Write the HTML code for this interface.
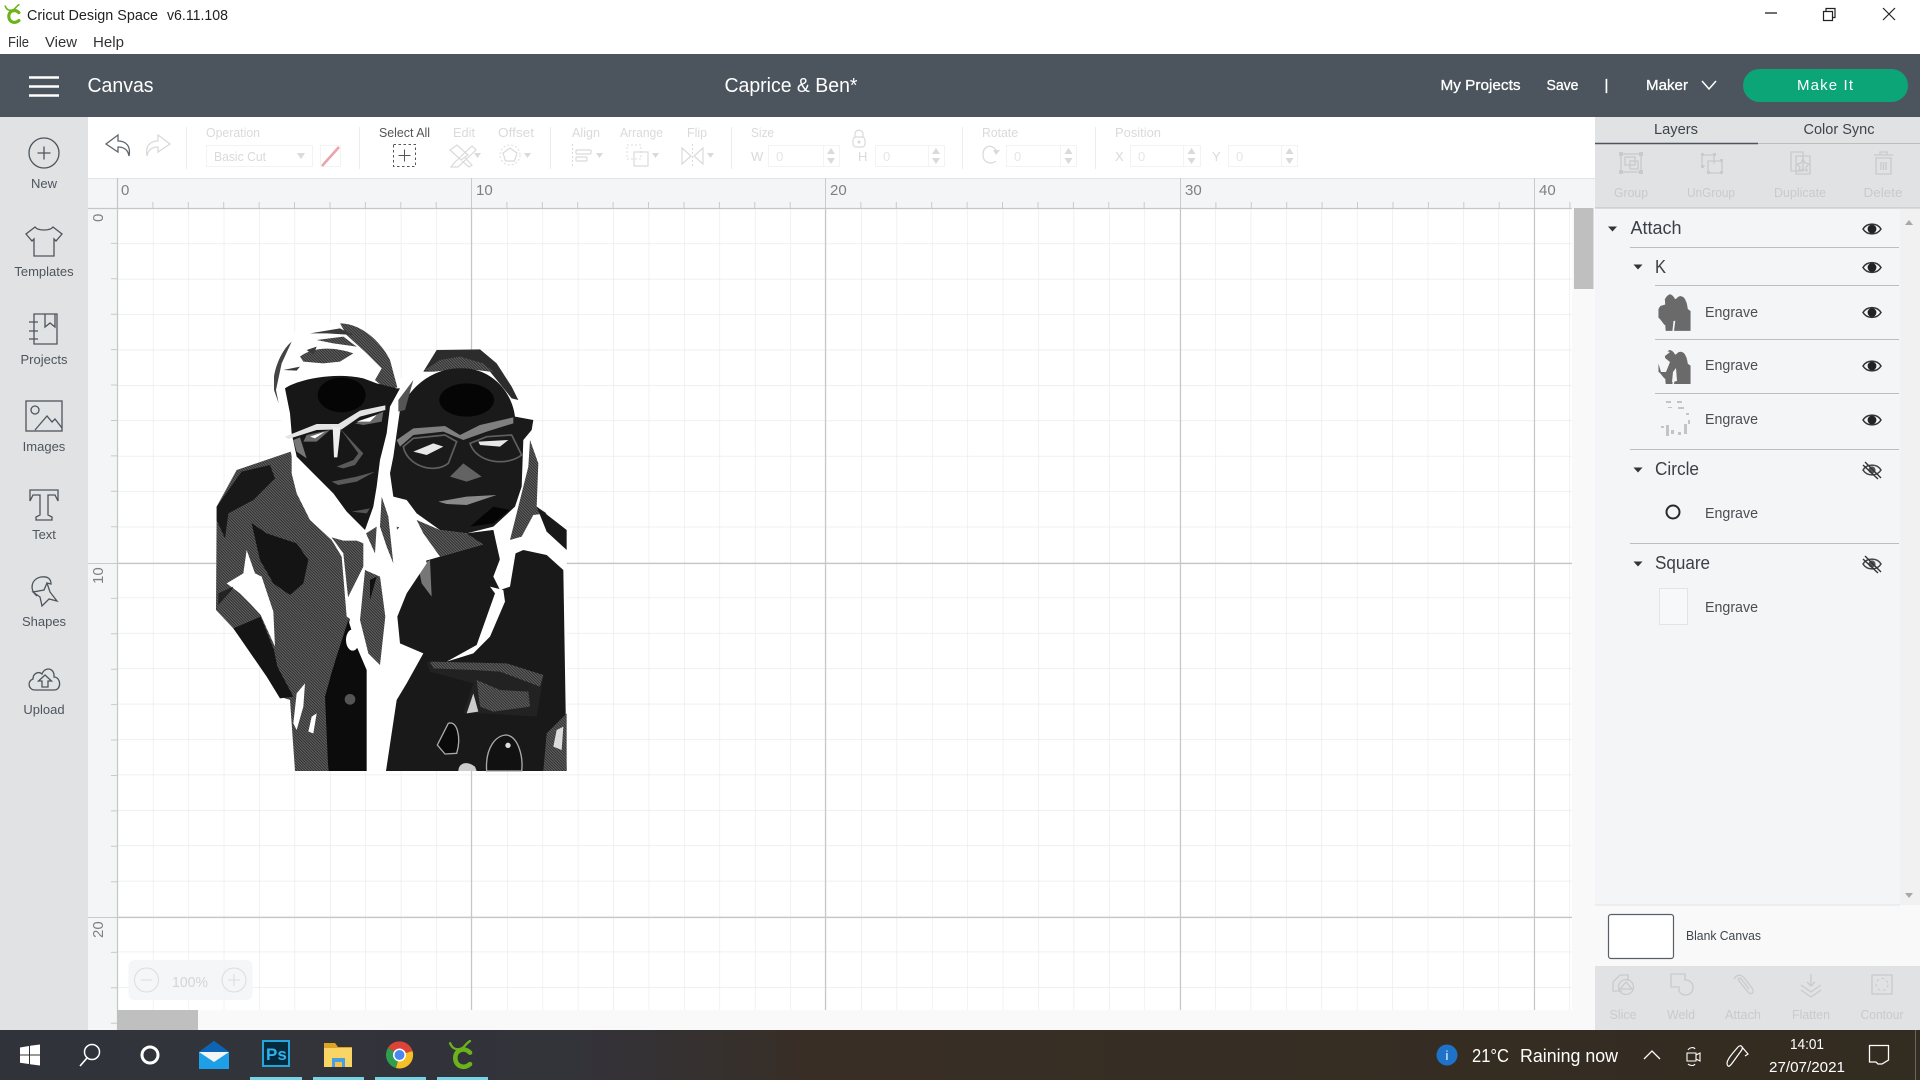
<!DOCTYPE html>
<html lang="en"><head><meta charset="utf-8"><title>Cricut Design Space</title>
<style>
html,body{margin:0;padding:0;width:1920px;height:1080px;overflow:hidden;background:#fff}
svg{display:block;position:absolute;left:0;top:0}
text{font-family:"Liberation Sans",sans-serif}
.d{fill:#d9dadb;font-size:13px}
.g{fill:#c9cacb;font-size:13px}
.n{fill:#4c555d;font-size:13px;text-anchor:middle}
.w{fill:#fff}
.r{fill:#808080;font-size:15px}
.e{fill:#4a4f54;font-size:15px}
.h{fill:#3a4046;font-size:18px}
.ic{fill:none;stroke:#4c555d;stroke-width:1.3}
.lt{fill:none;stroke:#d9dadb;stroke-width:1.2}
.pi{fill:none;stroke:#c9cacb;stroke-width:1.3}
.box{fill:#fff;stroke:#f3f3f3}
.sp{fill:#d9dadb}
.z{fill:#e6e6e6;font-size:13px}
</style></head><body>
<svg width="1920" height="1080" viewBox="0 0 1920 1080" xmlns="http://www.w3.org/2000/svg">
<defs>
<pattern id="mn" x="117.5" y="208" width="35.41" height="35.41" patternUnits="userSpaceOnUse"><path d="M0,0V35.41M0,0H35.41" stroke="#e8e8e8" stroke-width="1.2" fill="none"/></pattern>
<pattern id="hat" width="6" height="6" patternUnits="userSpaceOnUse" patternTransform="rotate(45)"><rect width="6" height="6" fill="#626262"/><rect width="6" height="2.8" fill="#2c2c2c"/></pattern>
<g id="eye"><path d="M-9,0C-5,-6.5 5,-6.5 9,0C5,6.5 -5,6.5 -9,0Z" fill="none" stroke="#333" stroke-width="1.5"/><circle r="4.4" fill="#222"/></g>
<g id="eyex"><path d="M-9,0C-5,-6.5 5,-6.5 9,0C5,6.5 -5,6.5 -9,0Z" fill="none" stroke="#444" stroke-width="1.5"/><circle r="3.6" fill="#555"/><path d="M-7,-8L9,8M-9,-5L6,9" stroke="#333" stroke-width="1.4"/></g>
<path id="tri" d="M-4.5,-2.5H4.5L0,2.5Z" fill="#333"/>
<path id="spin" d="M0,-8L4,-2H-4ZM0,8L4,2H-4Z" fill="#d9dadb"/>
<g id="sil">
<path d="M255,265C290,200 330,120 420,80C500,100 560,170 590,260C640,240 680,160 760,148C860,150 930,240 950,350L1000,360L1010,620L1100,690V1413H285L270,1200L240,1190L100,985L48,930V620L110,510L270,455Z"/>
<path d="M600,60V262L660,215L720,60ZM505,1420H558L600,1040L540,1060ZM900,60L1010,350L1110,350V690L1015,610ZM0,60L250,260L265,450L0,520Z" fill="#f4f5f7"/>
</g>
<g id="cri" fill="none" stroke="#6cb31b" stroke-linecap="round"><path d="M20,12C14,6 6,10 6,17C6,25 14,28 20,23" stroke-width="4.4"/><path d="M1,3C3,8 7,10 12,8C15,7 16,3 20,1" stroke-width="2.2"/></g>
</defs>

<!-- title and menu -->
<rect width="1920" height="54" fill="#fff"/>
<use href="#cri" transform="translate(4.5,4) scale(.72)"/>
<text x="27" y="20" font-size="15" fill="#222" textLength="131" lengthAdjust="spacingAndGlyphs">Cricut Design Space</text>
<text x="167" y="20" font-size="15" fill="#222" textLength="61" lengthAdjust="spacingAndGlyphs">v6.11.108</text>
<text x="8" y="47" font-size="15" fill="#333" textLength="21" lengthAdjust="spacingAndGlyphs">File</text>
<text x="45" y="47" font-size="15" fill="#333" textLength="32" lengthAdjust="spacingAndGlyphs">View</text>
<text x="93" y="47" font-size="15" fill="#333" textLength="31" lengthAdjust="spacingAndGlyphs">Help</text>
<path d="M1765,13H1777" stroke="#222" stroke-width="1.3"/>
<path d="M1823.5,11.5H1832.5V20.5H1823.5ZM1826,11.5V8.5H1835V17.5H1832.5" fill="none" stroke="#222" stroke-width="1.2"/>
<path d="M1883,8L1895,20M1895,8L1883,20" stroke="#222" stroke-width="1.2"/>

<!-- top nav -->
<rect y="54" width="1920" height="63" fill="#4c555d"/>
<path d="M29,77.5H59M29,86.5H59M29,95.5H59" stroke="#fff" stroke-width="2.6"/>
<text class="w" x="87.5" y="92" font-size="20" textLength="66" lengthAdjust="spacingAndGlyphs">Canvas</text>
<text class="w" x="724.5" y="92" font-size="20" textLength="133" lengthAdjust="spacingAndGlyphs">Caprice &amp; Ben*</text>
<g stroke="#fff" stroke-width=".3">
<text class="w" x="1440.5" y="90" font-size="15" textLength="80" lengthAdjust="spacingAndGlyphs">My Projects</text>
<text class="w" x="1546.5" y="90" font-size="15" textLength="32" lengthAdjust="spacingAndGlyphs">Save</text>
<text class="w" x="1604.5" y="90" font-size="15">|</text>
<text class="w" x="1646" y="90" font-size="15" textLength="42" lengthAdjust="spacingAndGlyphs">Maker</text>
</g>
<path d="M1702,81L1709,89L1716,81" fill="none" stroke="#fff" stroke-width="1.5"/>
<rect x="1743" y="69" width="165" height="33" rx="16.5" fill="#0ba577"/>
<text class="w" x="1797" y="90" font-size="15" textLength="56" lengthAdjust="spacing">Make It</text>

<!-- sidebar -->
<rect y="117" width="88" height="913" fill="#e1e2e4"/>
<circle cx="44" cy="153" r="15" class="ic"/><path d="M44,146.5V159.5M37.5,153H50.5" class="ic" stroke-width="1.7"/>
<text class="n" x="44" y="188">New</text>
<path d="M35,227C38,231 50,231 53,227L62,234L56,241L54,239V256H34V239L32,241L26,234Z" class="ic"/>
<text class="n" x="44" y="276">Templates</text>
<path d="M34,314H57V344H34ZM29,322H38M29,331H38M29,339H38M45,314V327L50,323L55,327V314" class="ic"/>
<text class="n" x="44" y="364">Projects</text>
<rect x="26" y="401" width="36" height="30" class="ic"/><circle cx="35" cy="410" r="4" class="ic"/><path d="M35,430L47,416L52,422L55,419L62,428" class="ic"/>
<text class="n" x="44" y="451">Images</text>
<path d="M30,490H58V501L55,495H48V515L52,517V520H36V517L40,515V495H33L30,501Z" class="ic"/>
<text class="n" x="44" y="539">Text</text>
<path d="M37,596C29,590 31,579 41,577C48,576 51,579 51,584L47,583L50,592L57,601L49,599L42,606L40,597L33,592L44,590L47,583" class="ic"/>
<text class="n" x="44" y="626">Shapes</text>
<path d="M35,690C28,690 27,681 33,679C33,673 39,671 42,674C45,666 55,668 54,677C61,677 62,690 54,690ZM42,687V681H38.5L45,675L51.5,681H48V687Z" class="ic"/>
<text class="n" x="44" y="714">Upload</text>

<!-- toolbar -->
<path d="M118,135L106,144L118,152V147C124,147 128,150 129,156C131,146 126,141 118,141Z" fill="none" stroke="#5e666d" stroke-width="1.3"/>
<path d="M158,135L170,144L158,152V147C152,147 148,150 147,156C145,146 150,141 158,141Z" fill="none" stroke="#d9dadb" stroke-width="1.3"/>
<path d="M186.5,127V169M359.5,127V169M550.5,127V169M731.5,127V169M962.5,127V169M1095.5,127V169" stroke="#ececec"/>
<text class="d" x="206" y="137" textLength="54" lengthAdjust="spacingAndGlyphs">Operation</text>
<rect x="206.500" y="145.500" width="106" height="21" class="box"/>
<text class="d" x="214" y="161" textLength="52" lengthAdjust="spacingAndGlyphs">Basic Cut</text>
<path d="M297,153H305L301,159Z" class="sp"/>
<rect x="320.500" y="145.500" width="20" height="21" class="box"/>
<path d="M322,166L339,147" stroke="#e8a5aa" stroke-width="2.6"/>
<text x="379" y="137" font-size="13" fill="#555" textLength="51" lengthAdjust="spacingAndGlyphs">Select All</text>
<rect x="393.500" y="144.500" width="22" height="22" fill="none" stroke="#555" stroke-dasharray="2.500 2.500"/>
<path d="M404.500,149.500V161.500M398.500,155.500H410.500" stroke="#555"/>
<text class="d" x="453" y="137" textLength="22" lengthAdjust="spacingAndGlyphs">Edit</text>
<path d="M450,150L457,145L468,155L461,160ZM454,163L472,146L476,150L458,167L451,167Z" class="lt"/><path d="M465,158L472,165L469,167L462,161" class="lt"/>
<path d="M474,153H481L477.500,158Z" class="sp"/>
<text class="d" x="498" y="137" textLength="36" lengthAdjust="spacingAndGlyphs">Offset</text>
<path d="M510,148L517,153L514.500,161H505.500L503,153Z" class="lt"/><circle cx="510" cy="155" r="10" fill="none" stroke="#dcddde" stroke-dasharray="2 2"/>
<path d="M524,153H531L527.500,158Z" class="sp"/>
<text class="d" x="572" y="137" textLength="28" lengthAdjust="spacingAndGlyphs">Align</text>
<path d="M572.500,144V167" stroke="#d9dadb" stroke-dasharray="2 2"/><rect x="576" y="150" width="15" height="4" rx="1" class="lt"/><rect x="576" y="157" width="11" height="4" rx="1" class="lt"/>
<path d="M596,153H603L599.500,158Z" class="sp"/>
<text class="d" x="620" y="137" textLength="43" lengthAdjust="spacingAndGlyphs">Arrange</text>
<rect x="627" y="145" width="14" height="14" fill="none" stroke="#dcddde" stroke-dasharray="2 2"/><rect x="634" y="152" width="14" height="14" fill="#fff" class="lt"/>
<path d="M652,153H659L655.500,158Z" class="sp"/>
<text class="d" x="687" y="137" textLength="20" lengthAdjust="spacingAndGlyphs">Flip</text>
<path d="M682,148L691,156L682,164ZM703,148L694,156L703,164Z" class="lt"/><path d="M692.500,144V168" stroke="#d9dadb" stroke-dasharray="2 2"/>
<path d="M707,153H714L710.500,158Z" class="sp"/>

<text class="d" x="751" y="137" textLength="23" lengthAdjust="spacingAndGlyphs">Size</text>
<text class="d" x="751" y="161">W</text>
<rect x="768.500" y="145.500" width="71" height="21" class="box"/><text class="z" x="776" y="161">0</text><path d="M823.500,146V166" stroke="#f3f3f3"/><use href="#spin" x="831" y="156"/>
<text class="d" x="858" y="161">H</text>
<rect x="875.500" y="145.500" width="69" height="21" class="box"/><text class="z" x="883" y="161">0</text><path d="M928.500,146V166" stroke="#f3f3f3"/><use href="#spin" x="936" y="156"/>
<rect x="853" y="137" width="12" height="10" rx="3" class="lt"/><path d="M855,137V134C855,129 863,129 863,134V137" class="lt"/><circle cx="859" cy="142" r="1.500" class="sp"/>
<text class="d" x="982" y="137" textLength="36" lengthAdjust="spacingAndGlyphs">Rotate</text>
<path d="M996,150C992,144 983,145 983,155C983,163 992,165 996,161" class="lt"/><path d="M993,150H1000L996,155Z" class="sp"/>
<rect x="1006.500" y="145.500" width="70" height="21" class="box"/><text class="z" x="1014" y="161">0</text><path d="M1060.500,146V166" stroke="#f3f3f3"/><use href="#spin" x="1068.500" y="156"/>
<text class="d" x="1115" y="137" textLength="46" lengthAdjust="spacingAndGlyphs">Position</text>
<text class="d" x="1115" y="161">X</text>
<rect x="1130.500" y="145.500" width="70" height="21" class="box"/><text class="z" x="1138" y="161">0</text><path d="M1183.500,146V166" stroke="#f3f3f3"/><use href="#spin" x="1191.500" y="156"/>
<text class="d" x="1212" y="161">Y</text>
<rect x="1228.500" y="145.500" width="69" height="21" class="box"/><text class="z" x="1236" y="161">0</text><path d="M1281.500,146V166" stroke="#f3f3f3"/><use href="#spin" x="1289.500" y="156"/>

<!-- rulers and canvas -->
<rect x="88" y="178" width="1507" height="30" fill="#f4f5f6"/>
<rect x="88" y="208" width="29" height="822" fill="#f4f5f6"/>
<path d="M88,178.500H1595" stroke="#e4e4e4"/>
<rect x="117" y="208" width="1455" height="802" fill="#fff"/>
<rect x="117" y="208" width="1455" height="802" fill="url(#mn)"/>
<path d="M471.500,208V1010M825.500,208V1010M1180.500,208V1010M1534.500,208V1010M117,563.500H1572M117,917.500H1572" stroke="#c6c6c6" stroke-width="1.200"/>
<path d="M117.500,178V1030M88,208.500H1572" stroke="#c6c6c6" stroke-width="1.200"/>
<path d="M471.500,178V208M825.500,178V208M1180.500,178V208M1534.500,178V208" stroke="#cacaca"/>
<path d="M152.900,202V208M188.300,202V208M223.700,202V208M259.100,202V208M294.500,202V208M330,202V208M365.400,202V208M400.800,202V208M436.200,202V208M506.900,202V208M542.300,202V208M577.700,202V208M613.100,202V208M648.500,202V208M684,202V208M719.400,202V208M754.800,202V208M790.200,202V208M860.900,202V208M896.300,202V208M931.700,202V208M967.100,202V208M1002.500,202V208M1038,202V208M1073.400,202V208M1108.800,202V208M1144.200,202V208M1215.900,202V208M1251.300,202V208M1286.700,202V208M1322.100,202V208M1357.500,202V208M1393,202V208M1428.400,202V208M1463.800,202V208M1499.200,202V208M1569.900,202V208" stroke="#cacaca"/>
<path d="M111,243.400H117M111,278.800H117M111,314.200H117M111,349.600H117M111,385H117M111,420.500H117M111,455.900H117M111,491.300H117M111,526.700H117M111,598.400H117M111,633.800H117M111,669.200H117M111,704.600H117M111,740H117M111,775.500H117M111,810.900H117M111,846.300H117M111,881.700H117M111,952.400H117M111,987.800H117M111,1023.200H117M88,563.500H117M88,917.500H117" stroke="#cacaca"/>
<text class="r" x="121" y="195">0</text><text class="r" x="476" y="195">10</text><text class="r" x="830" y="195">20</text><text class="r" x="1185" y="195">30</text><text class="r" x="1539" y="195">40</text>
<text class="r" transform="translate(103,222) rotate(-90)">0</text>
<text class="r" transform="translate(103,584) rotate(-90)">10</text>
<text class="r" transform="translate(103,938) rotate(-90)">20</text>
<!-- scrollbars -->
<rect x="1572" y="208" width="23" height="822" fill="#f9f9f9"/>
<rect x="1574" y="208" width="19.500" height="81" fill="#bfbfbf"/>
<rect x="117" y="1010" width="1478" height="20" fill="#f9f9f9"/>
<rect x="117" y="1010" width="81" height="20" fill="#bfbfbf"/>
<!-- zoom control -->
<rect x="128.500" y="960" width="124" height="40" rx="6" fill="#f4f5f6" opacity=".9"/>
<circle cx="146.500" cy="980" r="12" fill="none" stroke="#dcddde"/><path d="M141,980H152" stroke="#dcddde"/>
<text x="172" y="987" font-size="15" fill="#d4d5d6" textLength="36" lengthAdjust="spacingAndGlyphs">100%</text>
<circle cx="234" cy="980" r="12" fill="none" stroke="#dcddde"/><path d="M228,980H240M234,974V986" stroke="#dcddde"/>

<!-- photo design -->
<g transform="translate(200,300) scale(.33333)">
<path d="M220,225L255,130L300,80L420,65L510,100L590,240L670,210L710,150L840,148L930,250L1000,360L1015,500L1010,620L1100,690V1413H285L270,1200L240,1190L100,985L48,930V620L110,510L270,455L230,310Z" fill="#fff"/>
<!-- man's hair -->
<path d="M420,70C480,70 540,120 570,180L592,262L560,270L525,240L545,205L500,160L440,105Z" fill="url(#hat)"/>
<path d="M300,170C340,140 400,140 460,160L420,185L370,190L310,185ZM350,120L430,110L470,140L400,130Z" fill="url(#hat)"/>
<path d="M330,100L420,85L460,105L380,100ZM250,210L300,200L290,212ZM320,150L350,140L340,165Z" fill="#3a3a3a"/>
<path d="M222,230C228,190 250,145 275,125L245,190L228,270L236,310L222,270Z" fill="#444"/>
<!-- man's body -->
<path d="M50,620L110,510L272,455L290,530L340,620L420,700L490,730L490,800L440,900L450,960L400,1100L385,1190V1413H285L270,1200L240,1190L200,1120L100,985L48,930Z" fill="url(#hat)"/>
<path d="M275,465L300,540L350,610L420,680L500,722L430,722L395,712L430,760L445,900L455,960L440,950L425,770L395,720L330,660L290,580L275,520Z" fill="#fff"/>
<path d="M50,620L125,515L210,495L225,535L160,600L85,640L75,715L50,660Z" fill="#181818"/>
<path d="M155,670L200,700L290,730L325,780L310,850L270,885L220,850L180,780Z" fill="#141414"/>
<path d="M100,985L182,950L222,1050L232,1100L280,1190L240,1195L200,1130Z" fill="#141414"/>
<path d="M140,750L165,820L185,830L220,935L225,1040L182,945L150,910L120,880L80,850L130,820Z" fill="#fff"/>
<path d="M55,880L100,860L95,870L55,915Z" fill="#222"/>
<path d="M290,1180L315,1150L310,1220L290,1290L280,1270ZM335,1250L350,1240L340,1300L325,1295Z" fill="#fff"/>
<!-- man's face -->
<path d="M255,265C290,240 400,215 490,235L530,250L590,265L600,265L570,320L560,400L540,480L530,560L520,620L495,690L440,635L400,580L340,520L290,470L275,400L270,340Z" fill="#171717"/>
<ellipse cx="425" cy="285" rx="72" ry="52" fill="#050505"/>
<path d="M255,410L350,372L415,372L480,332L556,316V330L480,350L425,388L350,390L265,417Z" fill="#e4e4e4"/>
<path d="M398,380L422,385L412,472L402,472Z" fill="#eee"/>
<path d="M420,385L490,460L465,495L430,505L410,500L460,480L475,460ZM395,545L470,530L525,515L470,545L415,555Z" fill="#5a5a5a"/>
<path d="M280,420L300,412L320,475L290,455Z" fill="#777"/>
<path d="M320,405L390,390L350,425L310,425ZM465,370L550,335L545,365L490,375Z" fill="#6a6a6a"/>
<path d="M470,365L530,345L510,365ZM330,410L375,395L345,415Z" fill="#fff"/>
<path d="M455,635L510,625L500,640Z" fill="#555"/>
<!-- centre hair -->
<path d="M545,590L565,650L580,790L560,740L540,680ZM590,680L625,690L625,790L600,780ZM498,700L530,680L525,760Z" fill="url(#hat)"/>
<path d="M495,810L540,830L556,950L540,1095L505,1060L480,960Z" fill="url(#hat)"/>
<path d="M510,840L530,830L510,900Z" fill="#111"/>
<!-- centre strap -->
<path d="M445,960L470,1040L500,1110V1413H385L375,1190L400,1100Z" fill="#0c0c0c"/>
<ellipse cx="458" cy="1020" rx="20" ry="32" fill="#fff"/>
<circle cx="450" cy="1198" r="16" fill="#555"/>
<!-- woman's hair top -->
<path d="M670,215L710,150L840,148L890,190L935,260L955,300L935,295L870,215L790,205L700,215Z" fill="#2c2c2c"/>
<path d="M675,210L720,180L780,170L850,190L880,215L790,205L700,215Z" fill="url(#hat)"/>
<!-- woman's neck and body -->
<path d="M650,660L720,690L800,700L880,690L900,790L865,830L860,730L720,770L670,700Z" fill="url(#hat)"/>
<path d="M800,700L880,690L900,780L860,740Z" fill="#191919"/>
<path d="M650,790L720,770L860,730L900,780L970,750L1040,765L1090,810L1100,1413H558L590,1200L620,1150L670,1060L600,1030L592,950L620,880Z" fill="#191919"/>
<path d="M680,1085L1030,1130L1010,1250L850,1240L790,1240L820,1150L690,1115Z" fill="#222"/>
<path d="M690,1085L920,1090L1030,1125L1020,1160L900,1115L820,1110L700,1105Z" fill="url(#hat)"/>
<path d="M830,1140L900,1170L985,1175L990,1220L880,1235L840,1220Z" fill="url(#hat)"/>
<path d="M800,1240L820,1180L835,1235Z" fill="#ccc"/>
<path d="M1040,1300L1100,1240V1413H1030Z" fill="url(#hat)"/>
<path d="M1070,1290L1090,1280L1085,1350L1060,1340Z" fill="#ddd"/>
<path d="M745,1270C770,1260 785,1310 770,1360L735,1362L712,1335Z" fill="#0a0a0a" stroke="#aaa" stroke-width="4"/>
<path d="M860,1413C855,1340 890,1305 920,1305C955,1310 970,1370 965,1413Z" fill="#111" stroke="#aaa" stroke-width="4"/>
<circle cx="924" cy="1336" r="8" fill="#ddd"/>
<path d="M775,1413C775,1390 800,1380 825,1400L830,1413Z" fill="#ccc"/>
<!-- woman's white hair -->
<path d="M740,1085L830,1035L885,880L870,860L910,870L915,905L870,1010L820,1060Z" fill="#fff"/>
<path d="M655,800L690,780L695,890L665,850Z" fill="#777"/>
<path d="M620,660L660,700L680,790L620,880L600,880L600,780L580,700ZM880,830L960,620L975,440L985,500L1000,600L950,740L930,860L900,870Z" fill="#fff"/>
<!-- woman's right hair -->
<path d="M990,420L1015,490L1010,620L1040,640L1000,645L965,710L930,720L960,600L985,500Z" fill="url(#hat)"/>
<path d="M1010,620L1100,690V750L1040,695Z" fill="#181818"/>
<!-- woman's face -->
<path d="M600,330C640,240 720,200 790,205C870,205 935,270 945,350L1000,360L995,390L970,420L965,560L945,620L880,680L800,700L720,690L650,640L620,600L580,590L570,520L580,470L590,400Z" fill="#1a1a1a"/>
<ellipse cx="800" cy="300" rx="82" ry="50" fill="#050505"/>
<path d="M595,300L640,240L615,330L595,335Z" fill="#555"/>
<path d="M590,420L640,385L735,378L780,405L840,375L940,352V370L860,395L790,420L730,395L640,405L600,440Z" fill="#808080"/>
<path d="M610,440C620,495 700,525 745,490L770,425L735,405L640,415Z" fill="none" stroke="#606060" stroke-width="5"/>
<path d="M810,430C830,490 920,500 965,465L935,405L860,410Z" fill="none" stroke="#606060" stroke-width="5"/>
<path d="M640,455L700,430L730,440L680,465Z" fill="#e8e8e8"/>
<path d="M835,425L925,420L900,440L840,435Z" fill="#e8e8e8"/>
<path d="M750,530L790,490L845,530L800,545Z" fill="#636363"/>
<path d="M715,605L800,590L890,585L800,615L740,612Z" fill="#8a8a8a"/>
<path d="M810,680L880,620L930,630L880,670Z" fill="#050505"/>
</g>

<!-- right panel -->
<rect x="1595" y="117" width="325" height="91" fill="#e1e2e4"/>
<text x="1676" y="134" font-size="15" fill="#3d444a" text-anchor="middle" textLength="44" lengthAdjust="spacingAndGlyphs">Layers</text>
<text x="1839" y="134" font-size="15" fill="#3d444a" text-anchor="middle" textLength="71" lengthAdjust="spacingAndGlyphs">Color Sync</text>
<path d="M1595,143.500H1758" stroke="#4c555d" stroke-width="1.500"/><path d="M1758,143.500H1920" stroke="#bcbdbf"/>
<path d="M1595,208H1920" stroke="#c4c5c6" stroke-width="1.300"/>
<rect x="1621" y="154" width="20" height="18" class="pi"/><rect x="1625" y="157" width="10" height="8" class="pi"/><rect x="1630" y="161" width="8" height="8" class="pi"/>
<path d="M1619,152h4v4h-4zM1639,152h4v4h-4zM1619,170h4v4h-4zM1639,170h4v4h-4z" fill="#c9cacb"/>
<text class="g" x="1631" y="197" text-anchor="middle" textLength="34" lengthAdjust="spacingAndGlyphs">Group</text>
<path d="M1702,155H1714V164M1702,155V166H1705M1708,161H1722V173H1708Z" class="pi"/>
<path d="M1701,153h3v3h-3zM1713,153h3v3h-3zM1701,165h3v3h-3zM1707,171h3v3h-3zM1720,171h3v3h-3zM1720,159h3v3h-3z" fill="#c9cacb"/>
<text class="g" x="1711" y="197" text-anchor="middle" textLength="48" lengthAdjust="spacingAndGlyphs">UnGroup</text>
<path d="M1791,152H1803V171H1791ZM1796,156H1810V174H1796Z" class="pi"/><path d="M1803,159L1805,163L1809,164L1806,167L1807,171L1803,169L1799,171L1800,167L1797,164L1801,163Z" class="pi" stroke-width="1"/>
<text class="g" x="1800" y="197" text-anchor="middle" textLength="52" lengthAdjust="spacingAndGlyphs">Duplicate</text>
<path d="M1876,158H1891V174H1876ZM1874,155H1893M1880,155V152H1887V155M1881,162V170M1883.500,162V170M1886,162V170" class="pi"/>
<text class="g" x="1883" y="197" text-anchor="middle" textLength="39" lengthAdjust="spacingAndGlyphs">Delete</text>

<rect x="1595" y="209" width="305" height="696" fill="#f4f5f7"/>
<rect x="1900" y="209" width="20" height="696" fill="#f1f1f1"/>
<path d="M1905,225H1913L1909,220ZM1905,893H1913L1909,898Z" fill="#a8a8a8"/>
<use href="#tri" x="1612.500" y="229"/><text class="h" x="1630.500" y="234" textLength="51" lengthAdjust="spacingAndGlyphs">Attach</text><use href="#eye" x="1872" y="229"/>
<path d="M1630,247.500H1899M1655,285.500H1899M1655,339.500H1899M1655,393.500H1899M1630,449.500H1899M1630,543.500H1899" stroke="#bcbdbe"/>
<use href="#tri" x="1638" y="267"/><text class="h" x="1655" y="273" textLength="11" lengthAdjust="spacingAndGlyphs">K</text><use href="#eye" x="1872" y="267.500"/>

<g transform="translate(1657,292) scale(.0305,.0275)" fill="#6a6a6a"><use href="#sil"/></g>
<text class="e" x="1705" y="317" textLength="53" lengthAdjust="spacingAndGlyphs">Engrave</text><use href="#eye" x="1872" y="312.500"/>

<g transform="translate(1657,348) scale(.0305,.0255)" fill="#6a6a6a"><use href="#sil"/></g>
<path d="M1658,362L1665,358L1670,362L1666,372L1661,372ZM1663,350L1670,352L1665,356ZM1673,372L1676,368L1677,381L1672,382Z" fill="#f4f5f7"/>
<text class="e" x="1705" y="370" textLength="53" lengthAdjust="spacingAndGlyphs">Engrave</text><use href="#eye" x="1872" y="366"/>

<path d="M1666,401h5v2h-5zM1677,401h5v2h-5zM1668,407h4v1h-4zM1678,407h6v2h-6zM1686,413h3v2h-3zM1688,420h2v4h-2zM1661,426h3v2h-3zM1666,425h3v11h-3zM1671,430h3v4h-3zM1684,424h3v10h-3zM1678,432h3v3h-3z" fill="#c4c4c4"/>
<text class="e" x="1705" y="424" textLength="53" lengthAdjust="spacingAndGlyphs">Engrave</text><use href="#eye" x="1872" y="420"/>

<use href="#tri" x="1638" y="470"/><text class="h" x="1655" y="475" textLength="44" lengthAdjust="spacingAndGlyphs">Circle</text><use href="#eyex" x="1872" y="470"/>
<circle cx="1673" cy="512" r="6.500" fill="none" stroke="#2a2a2a" stroke-width="2"/>
<text class="e" x="1705" y="518" textLength="53" lengthAdjust="spacingAndGlyphs">Engrave</text>

<use href="#tri" x="1638" y="564"/><text class="h" x="1655" y="569" textLength="55" lengthAdjust="spacingAndGlyphs">Square</text><use href="#eyex" x="1872" y="564"/>
<rect x="1659.500" y="588.500" width="28" height="36" fill="#f7f8f9" stroke="#e3e4e5"/>
<text class="e" x="1705" y="612" textLength="53" lengthAdjust="spacingAndGlyphs">Engrave</text>

<rect x="1595" y="905" width="325" height="61" fill="#f9f9fa"/>
<path d="M1595,905H1900" stroke="#eaeaea" stroke-width="1.500"/>
<rect x="1608.500" y="914.500" width="65" height="44" rx="2.500" fill="#fff" stroke="#5a5f64" stroke-width="1.200"/>
<text x="1686" y="940" font-size="13" fill="#3f454a" textLength="75" lengthAdjust="spacingAndGlyphs">Blank Canvas</text>

<rect x="1595" y="966" width="325" height="64" fill="#e1e2e4"/>
<path d="M1613,982L1620,975H1628V981M1613,982V991H1622" class="pi"/><circle cx="1626" cy="987" r="7.500" class="pi"/><path d="M1620,989L1626,982L1632,989Z" class="pi"/>
<text class="g" x="1623" y="1019" text-anchor="middle" textLength="27" lengthAdjust="spacingAndGlyphs">Slice</text>
<path d="M1671,974H1685V980A7.500,7.500 0 1 1 1679,991V987H1671Z" class="pi"/>
<text class="g" x="1681" y="1019" text-anchor="middle" textLength="28" lengthAdjust="spacingAndGlyphs">Weld</text>
<path d="M1734,979C1738,973 1742,975 1745,979L1752,988C1755,992 1751,996 1748,992L1739,981C1737,978 1740,977 1742,980L1749,989" class="pi" stroke-width="1.800"/>
<text class="g" x="1743" y="1019" text-anchor="middle" textLength="36" lengthAdjust="spacingAndGlyphs">Attach</text>
<path d="M1811,974V986M1807,982L1811,986L1815,982M1801,985L1811,992L1821,985M1801,990L1811,997L1821,990" class="pi"/>
<text class="g" x="1811" y="1019" text-anchor="middle" textLength="38" lengthAdjust="spacingAndGlyphs">Flatten</text>
<rect x="1872" y="975" width="20" height="19" class="pi"/><circle cx="1882" cy="984.500" r="6" fill="none" stroke="#c9cacb" stroke-dasharray="3 2.500"/>
<text class="g" x="1882" y="1019" text-anchor="middle" textLength="43" lengthAdjust="spacingAndGlyphs">Contour</text>

<!-- taskbar -->
<linearGradient id="tb" x1="0" x2="1" y1="0" y2="0"><stop offset="0" stop-color="#30343a"/><stop offset=".3" stop-color="#33333a"/><stop offset=".42" stop-color="#382e26"/><stop offset="1" stop-color="#332c20"/></linearGradient>
<rect y="1030" width="1920" height="50" fill="url(#tb)"/>
<path d="M20,1047.500L29,1046V1054.500H20ZM30,1045.800L40,1044.500V1054.500H30ZM20,1055.500H29V1064L20,1062.800ZM30,1055.500H40V1065.500L30,1064.200Z" fill="#fff"/>
<circle cx="92" cy="1052" r="7.500" fill="none" stroke="#fff" stroke-width="1.500"/><path d="M87,1058L80,1066" stroke="#fff" stroke-width="1.700"/>
<circle cx="150" cy="1055" r="8" fill="none" stroke="#fff" stroke-width="3"/>
<path d="M199,1052L214,1041L229,1052V1069H199Z" fill="#1e9fe8"/><path d="M199,1052L214,1041L229,1052Z" fill="#0c64b5"/><path d="M199,1052H229L214,1062Z" fill="#f2f4f6"/>
<rect x="263" y="1041" width="26" height="25" fill="#062a3d" stroke="#22a6dc" stroke-width="2"/>
<text x="266" y="1060" font-size="17" font-weight="700" fill="#2cb5ee">Ps</text>
<path d="M324,1043H335L338,1047H352V1067H324Z" fill="#dfa224"/><rect x="324" y="1048" width="28" height="19" fill="#f9d565"/><rect x="332" y="1058" width="13" height="9" fill="#4a9fdf"/><rect x="335" y="1062" width="7" height="5" fill="#f3c24c"/>
<path d="M399.500,1055L388,1047.800A13.500,13.500 0 0 1 411.500,1048.800Z" fill="#d7392f"/><path d="M399.500,1041.500A13.500,13.500 0 0 1 412.500,1051L399.500,1055L388,1047.800A13.500,13.500 0 0 1 399.500,1041.500Z" fill="#db4437"/>
<path d="M388,1047.800A13.500,13.500 0 0 0 396,1068L399.500,1055Z" fill="#2f9e4f"/>
<path d="M412.500,1051A13.500,13.500 0 0 1 396,1068L399.500,1055Z" fill="#f5bf26"/>
<circle cx="399.500" cy="1055" r="6.500" fill="#fff"/><circle cx="399.500" cy="1055" r="5" fill="#4a88ee"/>
<use href="#cri" transform="translate(449,1040) scale(1.050)"/>
<path d="M250,1078.500H302M313,1078.500H364M375,1078.500H426M437,1078.500H488" stroke="#76d4e5" stroke-width="3"/>

<circle cx="1447" cy="1055" r="10.500" fill="#1e72c8"/><text class="w" x="1447" y="1060" font-size="13" text-anchor="middle">i</text>
<text class="w" x="1472" y="1062" font-size="18" textLength="37" lengthAdjust="spacingAndGlyphs">21°C</text>
<text class="w" x="1520" y="1062" font-size="18" textLength="98" lengthAdjust="spacingAndGlyphs">Raining now</text>
<path d="M1644,1059L1652,1051L1660,1059" fill="none" stroke="#fff" stroke-width="1.300"/>
<path d="M1687,1053H1696V1061H1687ZM1696,1055L1700,1053V1061L1696,1059M1688,1050C1690,1047 1694,1047 1695,1049M1688,1064C1690,1066 1694,1066 1695,1064" fill="none" stroke="#fff" stroke-width="1.100"/>
<path d="M1728,1066C1724,1062 1733,1053 1738,1047C1741,1044 1744,1047 1741,1051L1733,1062C1731,1065 1729,1067 1728,1066ZM1742,1047L1748,1054L1745,1056" fill="none" stroke="#fff" stroke-width="1.200"/>
<text class="w" x="1807" y="1049" font-size="15" text-anchor="middle" textLength="34" lengthAdjust="spacingAndGlyphs">14:01</text>
<text class="w" x="1807" y="1072" font-size="15" text-anchor="middle" textLength="76" lengthAdjust="spacingAndGlyphs">27/07/2021</text>
<path d="M1869.500,1045.500H1888.500V1060L1882,1064H1878L1876,1062H1869.500Z" fill="none" stroke="#fff" stroke-width="1.300"/>
<path d="M1915.500,1030V1080" stroke="#666"/>
</svg>
</body></html>
